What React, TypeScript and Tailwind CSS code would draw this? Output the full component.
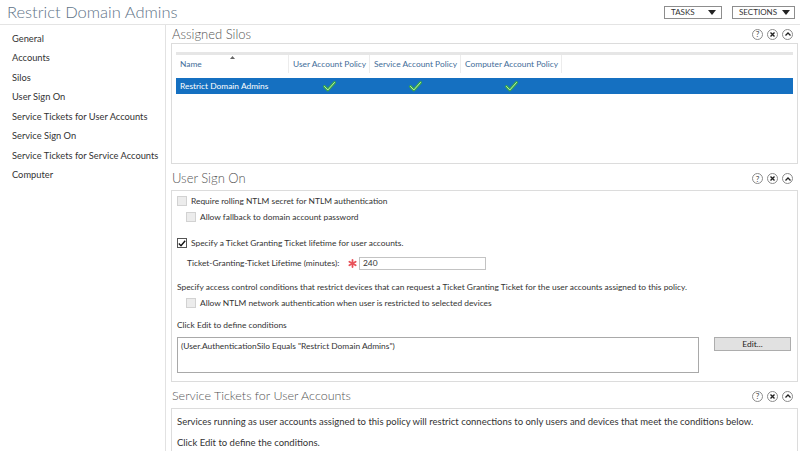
import React from 'react';

const navItems = [
  'General',
  'Accounts',
  'Silos',
  'User Sign On',
  'Service Tickets for User Accounts',
  'Service Sign On',
  'Service Tickets for Service Accounts',
  'Computer',
];

const DownTriangle = () => (
  <svg width="8" height="5" viewBox="0 0 8 5">
    <path d="M0 0 L8 0 L4 5 Z" fill="#222" />
  </svg>
);

const GreenCheck = () => (
  <svg width="13" height="11" viewBox="0 0 13 11">
    <path d="M1.5 5.5 L4.8 9 L11.5 1.5" fill="none" stroke="#3aa845" strokeWidth="2.8" strokeLinejoin="round" strokeLinecap="round" />
    <path d="M1.5 5.5 L4.8 9 L11.5 1.5" fill="none" stroke="#c4f5bd" strokeWidth="0.9" strokeLinejoin="round" strokeLinecap="round" />
  </svg>
);

const RedAsterisk = () => (
  <svg width="9" height="9" viewBox="0 0 10 10">
    <g stroke="#e8525a" strokeWidth="2" strokeLinecap="round">
      <line x1="5" y1="1" x2="5" y2="9" />
      <line x1="1.5" y1="3" x2="8.5" y2="7" />
      <line x1="1.5" y1="7" x2="8.5" y2="3" />
    </g>
  </svg>
);

const SectionButtons = () => (
  <div className="flex items-center gap-[4px]">
    <span className="flex h-[11px] w-[11px] items-center justify-center rounded-full border border-[#8c8c8c] text-[8px] leading-none text-[#444]">?</span>
    <span className="flex h-[11px] w-[11px] items-center justify-center rounded-full border border-[#8c8c8c]">
      <svg width="5" height="5" viewBox="0 0 5 5">
        <path d="M0.5 0.5 L4.5 4.5 M4.5 0.5 L0.5 4.5" stroke="#222" strokeWidth="1.4" />
      </svg>
    </span>
    <span className="flex h-[11px] w-[11px] items-center justify-center rounded-full border border-[#8c8c8c]">
      <svg width="6" height="4" viewBox="0 0 6 4">
        <path d="M0.5 3.5 L3 1 L5.5 3.5" fill="none" stroke="#222" strokeWidth="1.3" />
      </svg>
    </span>
  </div>
);

const Checkbox = ({ checked, disabled }: { checked?: boolean; disabled?: boolean }) => (
  <span
    className={`flex h-[10px] w-[10px] shrink-0 items-center justify-center border ${
      disabled ? 'border-[#d2d2d2] bg-[#ececec]' : 'border-[#555] bg-white'
    }`}
  >
    {checked && (
      <svg width="8" height="7" viewBox="0 0 8 7">
        <path d="M0.8 3.6 L3 5.8 L7.2 0.8" fill="none" stroke="#111" strokeWidth="1.4" />
      </svg>
    )}
  </span>
);

export default function App() {
  return (
    <div className="h-[451px] w-[800px] overflow-hidden whitespace-nowrap bg-white font-['Lato',sans-serif] text-[#333]">
      {/* Header */}
      <div className="flex h-[25px] items-center justify-between border-b border-[#e4e4e4] pl-[7px] pr-[5px]">
        <h1 className="text-[16.5px] font-light leading-none text-[#5f7488]">Restrict Domain Admins</h1>
        <div className="flex items-center gap-[10px] text-[8px] text-[#333]">
          <button className="flex h-[13px] w-[58px] items-center justify-between border border-[#8d8d8d] pl-[6px] pr-[5px]">
            TASKS <DownTriangle />
          </button>
          <button className="flex h-[13px] w-[63px] items-center justify-between border border-[#8d8d8d] pl-[6px] pr-[4px]">
            SECTIONS <DownTriangle />
          </button>
        </div>
      </div>

      <div className="flex h-[426px]">
        {/* Sidebar */}
        <nav className="w-[166px] shrink-0 border-r border-[#e2e2e2] pl-[12px] pt-[4px]">
          {navItems.map((item) => (
            <div key={item} className="flex h-[19.5px] items-center text-[9.3px] text-[#333]">
              {item}
            </div>
          ))}
        </nav>

        {/* Sections */}
        <main className="flex-1 pl-[5px] pr-[2px] text-[8.4px]">
          <div className="flex h-[18px] items-center justify-between pl-[1px] pr-[5px]">
            <h2 className="text-[13px] font-light leading-none text-[#555]">Assigned Silos</h2>
            <SectionButtons />
          </div>
          <div className="h-[121px] border border-[#dcdcdc] px-[4px] pt-[8px]">
            <div className="border-t-[3px] border-[#e6e6e6]">
              <div className="flex h-[18px] items-center text-[#3f6d99]">
                <div className="relative flex h-full w-[113px] items-center border-r border-[#ececec] pl-[4px]">
                  Name
                  <svg className="absolute left-[54px] top-[1px]" width="5" height="3" viewBox="0 0 5 3">
                    <path d="M0 3 L2.5 0 L5 3 Z" fill="#666" />
                  </svg>
                </div>
                <div className="flex h-full w-[81px] items-center border-r border-[#ececec] pl-[4px]">User Account Policy</div>
                <div className="flex h-full w-[91px] items-center border-r border-[#ececec] pl-[4px]">Service Account Policy</div>
                <div className="flex h-full w-[101px] items-center border-r border-[#ececec] pl-[4px]">Computer Account Policy</div>
              </div>
              <div className="mt-[5px] flex h-[16px] items-center bg-[#1570c1] text-white">
                <div className="w-[113px] pl-[4px]">Restrict Domain Admins</div>
                <div className="flex w-[81px] justify-center"><GreenCheck /></div>
                <div className="flex w-[91px] justify-center"><GreenCheck /></div>
                <div className="flex w-[101px] justify-center"><GreenCheck /></div>
              </div>
            </div>
          </div>

          <div className="flex h-[26px] items-center justify-between pl-[1px] pr-[5px] pt-[3px]">
            <h2 className="text-[13px] font-light leading-none text-[#555]">User Sign On</h2>
            <SectionButtons />
          </div>
          <div className="border border-[#dcdcdc] px-[5px] pb-[8px] pt-[2px]">
            <div className="flex h-[16px] items-center gap-[4px]">
              <Checkbox disabled />
              <span>Require rolling NTLM secret for NTLM authentication</span>
            </div>
            <div className="flex h-[16px] items-center gap-[4px] pl-[9px]">
              <Checkbox disabled />
              <span>Allow fallback to domain account password</span>
            </div>
            <div className="mt-[10px] flex h-[16px] items-center gap-[4px]">
              <Checkbox checked />
              <span>Specify a Ticket Granting Ticket lifetime for user accounts.</span>
            </div>
            <div className="mt-[4px] flex h-[16px] items-center pl-[10px]">
              <span className="w-[161px]">Ticket-Granting-Ticket Lifetime (minutes):</span>
              <RedAsterisk />
              <div className="ml-[2px] flex h-[13px] w-[127px] items-center border border-[#c3c3c3] pl-[3px]">240</div>
            </div>
            <div className="mt-[8px] flex h-[16px] items-center">
              Specify access control conditions that restrict devices that can request a Ticket Granting Ticket for the user accounts assigned to this policy.
            </div>
            <div className="flex h-[16px] items-center gap-[4px] pl-[9px]">
              <Checkbox disabled />
              <span>Allow NTLM network authentication when user is restricted to selected devices</span>
            </div>
            <div className="mt-[6px] flex h-[16px] items-center">Click Edit to define conditions</div>
            <div className="mt-[4px] flex gap-[15px]">
              <div className="h-[36px] w-[522px] border border-[#a9a9a9] px-[3px] pt-[2px]">
                (User.AuthenticationSilo Equals "Restrict Domain Admins")
              </div>
              <button className="flex h-[14px] w-[77px] items-center justify-center border border-[#adadad] bg-[#e1e1e1] text-[#222]">
                Edit...
              </button>
            </div>
          </div>

          <div className="flex h-[26px] items-center justify-between pl-[1px] pr-[5px] pt-[2px]">
            <h2 className="text-[12.5px] font-light leading-none text-[#555]">Service Tickets for User Accounts</h2>
            <SectionButtons />
          </div>
          <div className="h-[60px] border border-[#dcdcdc] px-[5px] pt-[5px] text-[9.5px]">
            <div className="flex h-[16px] items-center">
              Services running as user accounts assigned to this policy will restrict connections to only users and devices that meet the conditions below.
            </div>
            <div className="mt-[5px] flex h-[16px] items-center">Click Edit to define the conditions.</div>
          </div>
        </main>
      </div>
    </div>
  );
}
